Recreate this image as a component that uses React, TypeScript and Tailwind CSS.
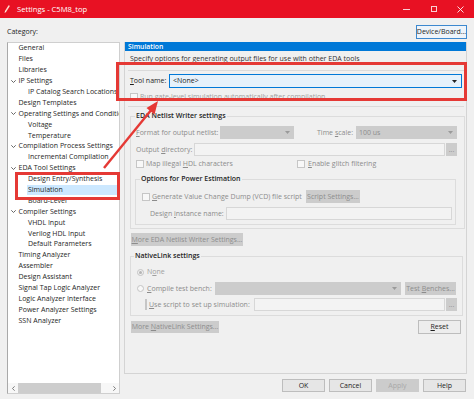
import type { ReactNode } from 'react'

type TreeRow = [number, string, boolean?]

const treeRows: TreeRow[] = [
  [0, 'General'],
  [0, 'Files'],
  [0, 'Libraries'],
  [0, 'IP Settings', true],
  [1, 'IP Catalog Search Locations'],
  [0, 'Design Templates'],
  [0, 'Operating Settings and Conditions', true],
  [1, 'Voltage'],
  [1, 'Temperature'],
  [0, 'Compilation Process Settings', true],
  [1, 'Incremental Compilation'],
  [0, 'EDA Tool Settings', true],
  [1, 'Design Entry/Synthesis'],
  [1, 'Simulation'],
  [1, 'Board-Level'],
  [0, 'Compiler Settings', true],
  [1, 'VHDL Input'],
  [1, 'Verilog HDL Input'],
  [1, 'Default Parameters'],
  [0, 'Timing Analyzer'],
  [0, 'Assembler'],
  [0, 'Design Assistant'],
  [0, 'Signal Tap Logic Analyzer'],
  [0, 'Logic Analyzer Interface'],
  [0, 'Power Analyzer Settings'],
  [0, 'SSN Analyzer'],
]

function Arrow({ dark }: { dark?: boolean }) {
  return (
    <svg width="5" height="3" viewBox="0 0 5 3" className="ml-auto shrink-0">
      <path d="M0 0 L5 0 L2.5 3 Z" fill={dark ? '#222' : '#9a9a9a'} />
    </svg>
  )
}

function Check() {
  return <span className="w-[8px] h-[8px] shrink-0 border border-[#c6c6c6] bg-[#f8f8f8]" />
}

function Btn({ children, className = '', disabled }: { children: ReactNode; className?: string; disabled?: boolean }) {
  const look = disabled
    ? 'bg-[#cccccc] border-[#cccccc] text-[#8c8c8c]'
    : 'bg-[#e6e6e6] border-[#bdbdbd] text-[#1e1e1e]'
  return (
    <div className={'flex items-center justify-center border whitespace-nowrap shrink-0 ' + look + ' ' + className}>
      {children}
    </div>
  )
}

function Combo({ text, className = '' }: { text?: string; className?: string }) {
  return (
    <div className={'h-[13px] bg-[#cccccc] flex items-center pl-[3px] pr-[4px] text-[#8c8c8c] shrink-0 ' + className}>
      {text}
      <Arrow />
    </div>
  )
}

function Field({ className = '' }: { className?: string }) {
  return <div className={'h-[13px] border border-[#d7d7d7] bg-[#f3f3f3] ' + className} />
}

export default function App() {
  return (
    <div className="relative w-[474px] h-[399px] overflow-hidden bg-[#f0f0f0] font-['Open_Sans',sans-serif] text-[7px] leading-[10px] text-[#1e1e1e]">
      {/* title bar */}
      <div className="h-[18px] bg-[#e81123] flex items-center text-white">
        <svg width="6" height="8" viewBox="0 0 6 8" className="ml-[4px]">
          <path d="M5 1 L1.5 6.5" stroke="#ffd6c8" strokeWidth="1.4" strokeLinecap="round" />
          <path d="M1.5 6.5 L1 7.5" stroke="#ffffff" strokeWidth="1" />
        </svg>
        <span className="ml-[7px] text-[7.6px]">Settings - C5M8_top</span>
        <div className="ml-auto flex h-full">
          <div className="w-[27px] flex items-center justify-center">
            <span className="w-[7px] h-[1px] bg-white/80" />
          </div>
          <div className="w-[27px] flex items-center justify-center">
            <span className="w-[6px] h-[6px] border border-white/80" />
          </div>
          <div className="w-[27px] flex items-center justify-center">
            <svg width="7" height="7" viewBox="0 0 7 7">
              <path d="M0.5 0.5 L6.5 6.5 M6.5 0.5 L0.5 6.5" stroke="rgba(255,255,255,0.85)" strokeWidth="1" />
            </svg>
          </div>
        </div>
      </div>

      <div className="flex flex-col px-[7px] pt-[7px]">
        <div className="flex h-[14px] items-center justify-between">
          <span>Category:</span>
          <div className="w-[51px] h-[14px] flex items-center justify-center border border-[#3c88cf] bg-[#eef4fa] whitespace-nowrap">
            Device/Board...
          </div>
        </div>

        <div className="flex mt-[3px]">
          {/* category tree */}
          <div className="w-[113px] h-[352px] flex flex-col border border-[#cfcfcf] border-l-[#a9a9a9] bg-white">
            <div className="flex-1 overflow-hidden whitespace-nowrap">
              {treeRows.map(([level, label, open]) => (
                <div key={label} className="h-[10.9px] flex items-center">
                  {level === 0 ? (
                    <>
                      <span className="w-[10.5px] flex justify-end pr-[3px] shrink-0">
                        {open && (
                          <svg width="5" height="3" viewBox="0 0 5 3">
                            <path d="M0.3 0.3 L2.5 2.5 L4.7 0.3" stroke="#555" strokeWidth="0.9" fill="none" />
                          </svg>
                        )}
                      </span>
                      <span>{label}</span>
                    </>
                  ) : (
                    <span
                      className={
                        'ml-[19px] mr-[2px] pl-[1px] flex-1 h-full flex items-center ' +
                        (label === 'Simulation' ? 'bg-[#cce8ff]' : '')
                      }
                    >
                      {label}
                    </span>
                  )}
                </div>
              ))}
            </div>
            <div className="h-[10px] flex items-center bg-[#f7f7f7]">
              <span className="w-[10px] flex justify-center">
                <svg width="3" height="5" viewBox="0 0 3 5">
                  <path d="M2.6 0.3 L0.5 2.5 L2.6 4.7" stroke="#606060" strokeWidth="0.8" fill="none" />
                </svg>
              </span>
              <span className="w-[83px] h-full bg-[#cdcdcd]" />
              <span className="ml-auto w-[10px] flex justify-center">
                <svg width="3" height="5" viewBox="0 0 3 5">
                  <path d="M0.4 0.3 L2.5 2.5 L0.4 4.7" stroke="#606060" strokeWidth="0.8" fill="none" />
                </svg>
              </span>
            </div>
          </div>

          <div className="ml-[4px] w-[343px] flex flex-col">
            {/* settings page */}
            <div className="h-[332px] border-l border-r border-b border-[#d4d4d4] flex flex-col">
              <div className="h-[9px] bg-[#0078d7] text-white font-semibold flex items-center pl-[3px] text-[6.8px]">
                Simulation
              </div>
              <div className="pl-[5px] pr-[2px] flex flex-col">
                <div className="mt-[3px] h-[10px] flex items-center text-[#333]">
                  Specify options for generating output files for use with other EDA tools
                </div>
                <div className="mt-[6px] ml-[-2px] w-[336px] h-px bg-[#dadada]" />
                <div className="mt-[3px] h-[14px] flex items-center">
                  <span className="w-[39px]">
                    <u>T</u>ool name:
                  </span>
                  <div className="w-[293px] h-[14px] bg-[#e5f1fb] border border-[#0078d7] flex items-center pl-[3px] pr-[4px]">
                    &lt;None&gt;
                    <Arrow dark />
                  </div>
                </div>
                <div className="mt-[4px] h-[10px] flex items-center text-[#a0a0a0]">
                  <Check />
                  <span className="ml-[2px]">Run gate-level simulation automatically after compilation</span>
                </div>
                <div className="mt-[4px] ml-[-2px] w-[336px] h-px bg-[#dadada]" />

                {/* EDA Netlist Writer settings */}
                <fieldset className="mt-[4px] w-[335px] border border-[#dcdcdc] pl-[5px] pr-[7px] pb-[3px]">
                  <legend className="-ml-[1px] px-[1px] font-semibold leading-[10px]">EDA Netlist Writer settings</legend>
                  <div className="mt-[5px] h-[13px] flex items-center text-[#8c8c8c]">
                    <span className="w-[84px] whitespace-nowrap">
                      <u>F</u>ormat for output netlist:
                    </span>
                    <Combo className="w-[74px]" />
                    <span className="ml-auto">
                      Time <u>s</u>cale:
                    </span>
                    <Combo className="ml-[3px] w-[101px]" text="100 us" />
                  </div>
                  <div className="mt-[4px] h-[13px] flex items-center text-[#8c8c8c]">
                    <span className="w-[58px] shrink-0 whitespace-nowrap">
                      Output <u>d</u>irectory:
                    </span>
                    <Field className="flex-1" />
                    <Btn disabled className="ml-[1px] w-[11px] h-[13px]">
                      ...
                    </Btn>
                  </div>
                  <div className="mt-[3px] h-[10px] flex items-center text-[#8c8c8c]">
                    <div className="w-[161px] flex items-center">
                      <Check />
                      <span className="ml-[2px]">
                        Map illegal <u>H</u>DL characters
                      </span>
                    </div>
                    <Check />
                    <span className="ml-[3px]">
                      <u>E</u>nable glitch filtering
                    </span>
                  </div>

                  <fieldset className="mt-[5px] -ml-[1px] w-[321px] border border-[#dcdcdc] pl-[5px] pr-[3px] pb-[4px]">
                    <legend className="-ml-[1px] px-[1px] font-semibold leading-[10px]">Options for Power Estimation</legend>
                    <div className="mt-[6px] h-[13px] flex items-center text-[#8c8c8c]">
                      <span className="ml-[1px] w-[164px] flex items-center shrink-0">
                        <Check />
                        <span className="ml-[2px] whitespace-nowrap">
                          <u>G</u>enerate Value Change Dump (VCD) file script
                        </span>
                      </span>
                      <Btn disabled className="w-[54px] h-[13px]">
                        Script Settings...
                      </Btn>
                    </div>
                    <div className="mt-[4px] h-[13px] flex items-center text-[#8c8c8c]">
                      <span className="ml-[9px] w-[76px] shrink-0 whitespace-nowrap">
                        Design <u>i</u>nstance name:
                      </span>
                      <Field className="flex-1" />
                    </div>
                  </fieldset>
                </fieldset>

                <Btn disabled className="mt-[4px] ml-[1px] w-[112px] h-[13px]">
                  <span>
                    <u>M</u>ore EDA Netlist Writer Settings...
                  </span>
                </Btn>

                {/* NativeLink settings */}
                <fieldset className="mt-[5px] w-[333px] border border-[#dcdcdc] pl-[4px] pr-[5px] pb-[4px]">
                  <legend className="-ml-[1px] px-[1px] font-semibold leading-[10px]">NativeLink settings</legend>
                  <div className="mt-[6px] h-[10px] flex items-center text-[#a0a0a0]">
                    <span className="ml-[2px] w-[7px] h-[7px] rounded-full border border-[#c4c4c4] flex items-center justify-center">
                      <span className="w-[3px] h-[3px] rounded-full bg-[#b5b5b5]" />
                    </span>
                    <span className="ml-[3px]">
                      N<u>o</u>ne
                    </span>
                  </div>
                  <div className="mt-[5px] h-[13px] flex items-center text-[#8c8c8c]">
                    <span className="ml-[2px] w-[7px] h-[7px] rounded-full border border-[#c4c4c4] bg-[#f8f8f8] shrink-0" />
                    <span className="ml-[3px] w-[68px] shrink-0 whitespace-nowrap">
                      <u>C</u>ompile test bench:
                    </span>
                    <Combo className="w-[186px]" />
                    <Btn disabled className="ml-[4px] w-[51px] h-[13px]">
                      <span>
                        Test <u>B</u>enches...
                      </span>
                    </Btn>
                  </div>
                  <div className="mt-[3px] h-[13px] flex items-center text-[#8c8c8c]">
                    <span className="ml-[10px]">
                      <Check />
                    </span>
                    <span className="ml-[2px] w-[105px] shrink-0 whitespace-nowrap">
                      <u>U</u>se script to set up simulation:
                    </span>
                    <Field className="flex-1" />
                    <Btn disabled className="ml-[1px] w-[11px] h-[13px]">
                      ...
                    </Btn>
                  </div>
                </fieldset>

                <div className="mt-[4px] ml-[1px] w-[330px] h-[14px] flex items-center justify-between">
                  <Btn disabled className="w-[88px] h-[12px]">
                    <span>
                      More <u>N</u>ativeLink Settings...
                    </span>
                  </Btn>
                  <Btn className="w-[43px] h-[14px] bg-[#ededed]">
                    <span>
                      <u>R</u>eset
                    </span>
                  </Btn>
                </div>
              </div>
            </div>

            {/* dialog buttons */}
            <div className="mt-[5px] flex justify-end gap-[4px] pr-px">
              <Btn className="w-[43px] h-[13px]">OK</Btn>
              <Btn className="w-[43px] h-[13px]">Cancel</Btn>
              <Btn disabled className="w-[43px] h-[13px] text-[#a8a8a8]">
                Apply
              </Btn>
              <Btn className="w-[43px] h-[13px]">Help</Btn>
            </div>
          </div>
        </div>
      </div>

      {/* red annotation */}
      <div className="absolute left-[116px] top-[62px] w-[351px] h-[39px] border-[3px] border-[#e53935] pointer-events-none" />
      <div className="absolute left-[15px] top-[172px] w-[105px] h-[28px] border-[3px] border-[#e53935] pointer-events-none" />
      <svg className="absolute left-0 top-0 pointer-events-none" width="474" height="399" viewBox="0 0 474 399">
        <path d="M104 168 L152 109" stroke="#e53935" strokeWidth="2.4" />
        <path d="M158 101 L154.5 114.5 L146.5 108 Z" fill="#e53935" />
      </svg>
    </div>
  )
}
